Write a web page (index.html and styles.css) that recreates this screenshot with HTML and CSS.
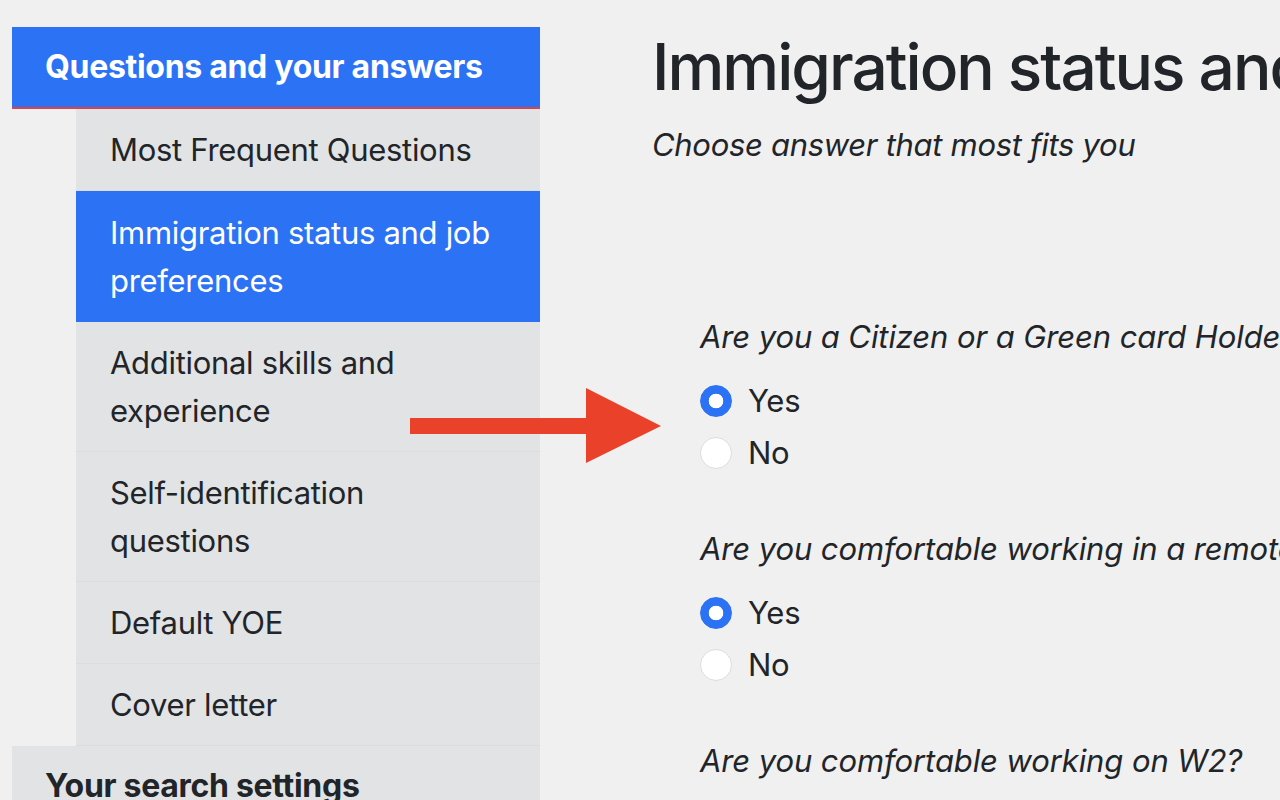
FILE: index.html
```html
<!DOCTYPE html>
<html lang="en">
<head>
<meta charset="utf-8">
<title>Immigration status and job preferences</title>
<link rel="stylesheet" href="styles.css">
</head>
<body>
<div class="layout">
  <aside class="sidebar">
    <div class="side-head side-head-active">Questions and your answers</div>
    <ul class="side-list">
      <li class="side-item">Most Frequent Questions</li>
      <li class="side-item side-item-active">Immigration status and job preferences</li>
      <li class="side-item">Additional skills and experience</li>
      <li class="side-item">Self-identification questions</li>
      <li class="side-item">Default YOE</li>
      <li class="side-item">Cover letter</li>
    </ul>
    <div class="side-head">Your search settings</div>
  </aside>
  <main class="content">
    <h1 class="title">Immigration status and job preferences</h1>
    <p class="lead">Choose answer that most fits you</p>
    <div class="questions">
      <div class="question">
        <p class="q-text">Are you a Citizen or a Green card Holder?</p>
        <label class="option"><input type="radio" name="q1" class="radio" checked><span>Yes</span></label>
        <label class="option"><input type="radio" name="q1" class="radio"><span>No</span></label>
      </div>
      <div class="question">
        <p class="q-text">Are you comfortable working in a remote position?</p>
        <label class="option"><input type="radio" name="q2" class="radio" checked><span>Yes</span></label>
        <label class="option"><input type="radio" name="q2" class="radio"><span>No</span></label>
      </div>
      <div class="question">
        <p class="q-text">Are you comfortable working on W2?</p>
        <label class="option"><input type="radio" name="q3" class="radio" checked><span>Yes</span></label>
        <label class="option"><input type="radio" name="q3" class="radio"><span>No</span></label>
      </div>
    </div>
  </main>
</div>
<svg class="arrow" width="260" height="80" viewBox="0 0 260 80" aria-hidden="true">
  <rect x="0" y="30" width="180" height="16" fill="#e9412a"/>
  <polygon points="176,0 251,38 176,75" fill="#e9412a"/>
</svg>
</body>
</html>
```

FILE: styles.css
```css
* { box-sizing: border-box; }

html, body {
  margin: 0;
  padding: 0;
  width: 1280px;
  height: 800px;
  overflow: hidden;
  background: #f0f0f0;
}

body {
  font-family: "Inter", "Noto Sans", sans-serif;
  color: #212529;
  font-size: 31px;
  letter-spacing: -0.3px;
  line-height: 48px;
  position: relative;
}

.layout {
  display: flex;
  padding: 27px 0 0 12px;
  gap: 112px;
}

.sidebar {
  flex: 0 0 528px;
  width: 528px;
}

.side-head {
  padding: 16px 33px;
  font-size: 32px;
  font-weight: 700;
  background: #e2e3e5;
  color: #212529;
  white-space: nowrap;
}

.side-head-active {
  background: #2b72f5;
  color: #ffffff;
  border-bottom: 2px solid #d9444a;
}

.side-list {
  list-style: none;
  margin: 0 0 0 64px;
  padding: 0;
}

.side-item {
  background: #e2e3e5;
  padding: 17px 32px 16px 34px;
  border-bottom: 1px solid #dcdde1;
}

.side-item-active {
  background: #2b72f5;
  color: #ffffff;
  padding-top: 18px;
  padding-bottom: 16px;
  border-bottom-color: #2b72f5;
}

.content {
  flex: 1 1 auto;
  min-width: 0;
}

.title {
  margin: 0;
  font-size: 64px;
  line-height: 79px;
  font-weight: 500;
  white-space: nowrap;
  letter-spacing: -2px;
}

.lead {
  margin: 15px 0 0;
  font-style: italic;
  white-space: nowrap;
}

.questions {
  margin-top: 144px;
  padding-left: 48px;
}

.question {
  margin-bottom: 46px;
}

.q-text {
  margin: 0 0 14px;
  font-style: italic;
  white-space: nowrap;
  letter-spacing: -0.1px;
}

.option {
  display: flex;
  align-items: center;
  gap: 16px;
  height: 52px;
}

.radio {
  appearance: none;
  -webkit-appearance: none;
  margin: 0;
  width: 32px;
  height: 32px;
  border-radius: 50%;
  background: #ffffff;
  border: 1.5px solid #d9dde2;
  flex: 0 0 32px;
}

.radio:checked {
  border-color: #2b72f5;
  background: radial-gradient(circle, #ffffff 0 7px, #2b72f5 7.6px);
}

.arrow {
  position: absolute;
  left: 410px;
  top: 388px;
}
```
